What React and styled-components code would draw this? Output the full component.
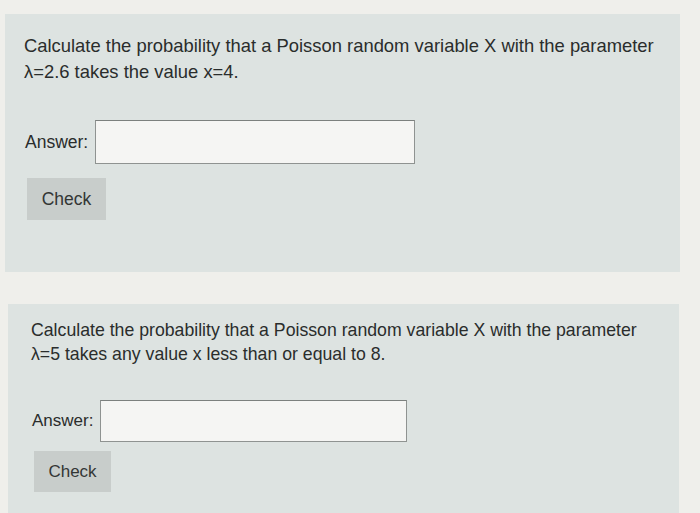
import React from "react";
import styled, { createGlobalStyle } from "styled-components";

const GlobalStyle = createGlobalStyle`
  html, body {
    margin: 0;
    padding: 0;
    background: #efefeb;
    overflow: hidden;
  }
  body {
    font-family: "Liberation Sans", Arial, sans-serif;
    color: #2a2d2c;
  }
`;

const Page = styled.div`
  width: 700px;
  height: 513px;
  padding: 14px 0 0 5px;
  box-sizing: border-box;
  display: flex;
  flex-direction: column;
  gap: 32px;
`;

const Panel = styled.div`
  background: #dde3e1;
  box-sizing: border-box;
  width: ${(p) => p.$width}px;
  margin-left: ${(p) => p.$shift}px;
  padding: ${(p) => p.$pad};
  flex-shrink: 0;
`;

const Question = styled.p`
  margin: 0;
  font-size: ${(p) => p.$size}px;
  line-height: ${(p) => p.$line}px;
  white-space: nowrap;
`;

const AnswerRow = styled.div`
  display: flex;
  align-items: center;
  gap: 7px;
  margin: ${(p) => p.$gap}px 0 0 1px;
`;

const Label = styled.label`
  font-size: ${(p) => p.$size}px;
`;

const Input = styled.input`
  box-sizing: border-box;
  width: ${(p) => p.$width}px;
  height: ${(p) => p.$height}px;
  background: #f5f5f3;
  border: 1px solid #8f9391;
  border-top-color: #7c807e;
  margin: 0;
  padding: 0 8px;
  font: inherit;
`;

const CheckButton = styled.button`
  display: block;
  box-sizing: border-box;
  width: ${(p) => p.$width}px;
  height: ${(p) => p.$height}px;
  margin: ${(p) => p.$gap}px 0 0 3px;
  background: #c8cdcb;
  border: none;
  color: #333635;
  font-family: "Liberation Sans", Arial, sans-serif;
  font-size: ${(p) => p.$size}px;
  padding: 0;
`;

function QuestionBlock({ lines, s }) {
  return (
    <Panel $width={s.width} $shift={s.shift} $pad={s.pad}>
      <Question $size={s.text} $line={s.line}>
        {lines[0]}
        <br />
        {lines[1]}
      </Question>
      <AnswerRow $gap={s.rowGap}>
        <Label $size={s.font}>Answer:</Label>
        <Input $width={s.inputW} $height={s.inputH} />
      </AnswerRow>
      <CheckButton
        $width={s.btnW}
        $height={s.btnH}
        $gap={s.btnGap}
        $size={s.font}
      >
        Check
      </CheckButton>
    </Panel>
  );
}

const first = {
  width: 675,
  shift: 0,
  pad: "19px 19px 52px",
  text: 18.4,
  font: 17.5,
  line: 26,
  rowGap: 35,
  inputW: 320,
  inputH: 44,
  btnW: 79,
  btnH: 42,
  btnGap: 14,
};

const second = {
  width: 671,
  shift: 3,
  pad: "14px 23px 30px",
  text: 17.7,
  font: 17,
  line: 24,
  rowGap: 34,
  inputW: 307,
  inputH: 42,
  btnW: 77,
  btnH: 41,
  btnGap: 9,
};

export default function App() {
  return (
    <>
      <GlobalStyle />
      <Page>
        <QuestionBlock
          s={first}
          lines={[
            "Calculate the probability that a Poisson random variable X with the parameter",
            "λ=2.6 takes the value x=4.",
          ]}
        />
        <QuestionBlock
          s={second}
          lines={[
            "Calculate the probability that a Poisson random variable X with the parameter",
            "λ=5 takes any value x less than or equal to 8.",
          ]}
        />
      </Page>
    </>
  );
}
